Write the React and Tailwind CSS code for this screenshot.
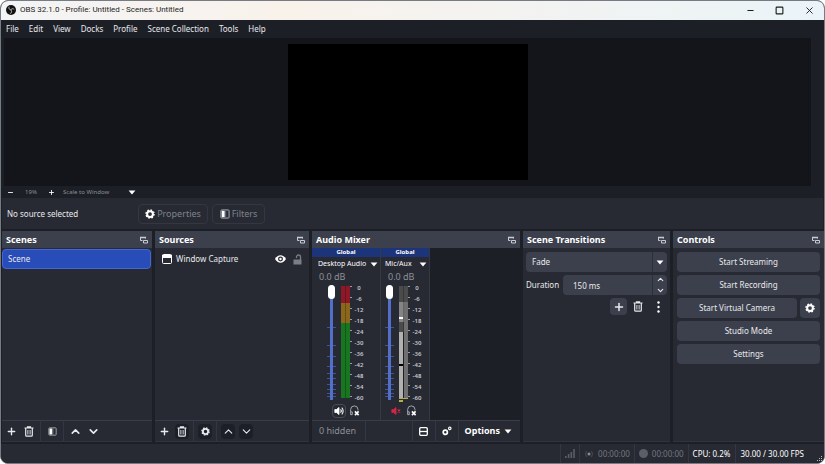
import React, { useState } from "react";
import { ChevronDown, ChevronUp, Minus, Plus, Square, X } from "lucide-react";

const MENUS = ["File", "Edit", "View", "Docks", "Profile", "Scene Collection", "Tools", "Help"];
const LEVELS = [0, -6, -12, -18, -24, -30, -36, -42, -48, -54, -60];
const FADER_TICKS = [42, 60, 71, 81, 88, 93, 99, 104, 108, 111];

const Gear = ({ className }) => (
  <svg viewBox="0 0 16 16" className={className} aria-hidden="true">
    <circle cx="8" cy="8" r="4.6" fill="none" stroke="currentColor" strokeWidth="3.2" />
    <circle cx="8" cy="8" r="6.4" fill="none" stroke="currentColor" strokeWidth="2.4" strokeDasharray="2.6 2.43" />
  </svg>
);

const FilterIcon = ({ className }) => (
  <svg viewBox="0 0 16 16" className={className} aria-hidden="true">
    <defs>
      <linearGradient id="fade">
        <stop offset="0" stopColor="#fff" />
        <stop offset="1" stopColor="#fff" stopOpacity="0" />
      </linearGradient>
    </defs>
    <rect x="1.5" y="1.5" width="13" height="13" rx="1" fill="none" stroke="#a9acb3" strokeWidth="1.6" />
    <rect x="3" y="3" width="8" height="10" fill="url(#fade)" />
    <rect x="3" y="3" width="4" height="10" fill="#fff" />
  </svg>
);

const Trash = () => (
  <svg viewBox="0 0 10 11" className="h-[11px] w-[10px]" fill="none" stroke="currentColor" aria-hidden="true">
    <path d="M.5 2h9M3.5 2V.8h3V2M1.7 2.5v6.8a.9.9 0 0 0 .9.9h4.8a.9.9 0 0 0 .9-.9V2.5" strokeWidth="1.2" />
    <path d="M3.6 4v4.5M5 4v4.5M6.4 4v4.5" strokeWidth=".8" opacity=".8" />
  </svg>
);

const PopOut = () => (
  <svg viewBox="0 0 8 8" className="h-2 w-2" fill="none" stroke="#c9cbd1" aria-hidden="true">
    <path d="M.5 4.5v-3h5v1" strokeWidth="1" />
    <path d="M0 1.5h6" strokeWidth="1.4" />
    <path d="M3.5 4.5h4v2.5h-4z" strokeWidth="1" />
    <path d="M.5 4.5h2" strokeWidth="1" />
  </svg>
);

const Caret = () => (
  <svg viewBox="0 0 8 5" className="h-[5px] w-2 shrink-0" aria-hidden="true">
    <path d="M.6.4h6.8L4 4.6z" fill="#fff" />
  </svg>
);

const Dock = ({ title, children, footer }) => (
  <section className="flex min-w-0 flex-col border-b border-[#31343e] bg-[#272a33]">
    <header className="flex h-[17px] shrink-0 items-center justify-between bg-[#3c404d] px-1">
      <h2 className="text-[9px] font-bold text-white">{title}</h2>
      <button aria-label={`Undock ${title}`}><PopOut /></button>
    </header>
    <div className="flex min-h-0 flex-1 flex-col">{children}</div>
    {footer && <footer className="flex h-[21px] shrink-0 items-center border-t border-[#3a3d48]">{footer}</footer>}
  </section>
);

const ToolButton = ({ label, dark, children }) => (
  <button aria-label={label} className="flex h-[15px] w-[18px] shrink-0 items-center justify-center">
    <span className={`flex h-[15px] w-[14px] items-center justify-center rounded-sm ${dark ? "bg-[#1d1f28]" : ""}`}>{children}</span>
  </button>
);

const Divider = () => <span className="mx-[2px] h-5 w-px shrink-0 bg-[#343741]" />;

const Meter = ({ muted }) => (
  <svg viewBox="0 0 26 118" className="h-[118px] w-[26px] shrink-0" aria-hidden="true">
    {muted ? (
      <>
        <path d="M0 1h9v16H0z" fill="#4b4b4b" />
        <path d="M0 17h9v20H0z" fill="#858585" />
        <path d="M0 37h9v10H0z" fill="#4b4b4b" />
        <path d="M5 17h4v96H5z" fill="#6f6f6f" />
        <path d="M0 47h4v66H0z" fill="#b0b0ae" />
        <path d="M0 32h4v2H0z" fill="#fff" />
        <path d="M0 79h4v2H0z" fill="#000" />
        <path d="M0 113h9v1H0zM0 115h4v2H0z" fill="#b5ad4c" />
      </>
    ) : (
      <>
        <path d="M0 1h9v17H0z" fill="#8f1828" />
        <path d="M0 18h9v20H0z" fill="#8b671b" />
        <path d="M0 38h9v75H0z" fill="#17761f" />
      </>
    )}
    <path d="M4 1h1v112H4z" fill="#000" opacity=".25" />
    {LEVELS.map((level, i) => (
      <g key={level}>
        <path d={`M9 ${1.5 + i * 11}h2`} stroke="#9a9ca4" />
        <text x="18" y={5 + i * 11} textAnchor="middle" fontSize="6" fontWeight="600" fill="#c4c6cc">{level}</text>
      </g>
    ))}
  </svg>
);

const Channel = ({ name, muted }) => {
  const [volume, setVolume] = useState(100);
  return (
    <div className={`flex shrink-0 flex-col border-r border-[#363944] ${muted ? "w-[49px]" : "w-[69px]"}`}>
      <div className="h-[9px] bg-[#1c3479] text-center text-[6px] leading-[9px] font-bold text-white">Global</div>
      <button className={`flex h-[14px] items-center justify-between pr-[2px] text-[7px] whitespace-nowrap text-white ${muted ? "pl-1" : "pl-[6px]"}`}>
        {name} <Caret />
      </button>
      <div className="h-[14px] px-[7px] text-[9px] leading-3 text-[#8d9099]">0.0 dB</div>
      <div className={`flex h-[116px] ${muted ? "pl-[4px]" : "pl-[15px]"}`}>
        <div className="relative w-[14px] shrink-0">
          <svg viewBox="0 0 9 114" className="absolute top-0 left-0 h-[114px] w-[9px]" stroke="#3e559b" aria-hidden="true">
            {FADER_TICKS.map((y) => <path key={y} d={`M0 ${y + 0.5}h9`} />)}
          </svg>
          <input
            type="range"
            aria-label={`${name} volume`}
            value={volume}
            onChange={(e) => setVolume(e.target.value)}
            className="relative ml-px block h-[115px] w-[7px] appearance-none bg-[linear-gradient(to_right,transparent_2px,#5270ca_2px,#5270ca_5px,transparent_5px)] [direction:rtl] [writing-mode:vertical-lr] [&::-webkit-slider-thumb]:h-[14px] [&::-webkit-slider-thumb]:w-[7px] [&::-webkit-slider-thumb]:appearance-none [&::-webkit-slider-thumb]:rounded-full [&::-webkit-slider-thumb]:bg-white"
          />
        </div>
        <Meter muted={muted} />
      </div>
      <div className={`flex flex-1 items-center gap-[3px] ${muted ? "pl-2" : "pl-5"}`}>
        <button aria-label={`Mute ${name}`} className={`flex h-[14px] w-[14px] items-center justify-center rounded-sm border ${muted ? "border-transparent text-[#cf2745]" : "border-[#484c58] text-white"}`}>
          <svg viewBox="0 0 12 12" className="h-[10px] w-[10px]" fill="none" stroke="currentColor" aria-hidden="true">
            <path d="M1 4.2h2L6 1.8v8.4L3 7.8H1z" fill="currentColor" />
            {muted ? <path d="M8 4l3 4M11 4L8 8" strokeWidth="1.3" /> : <path d="M7.8 4c1 1 1 3 0 4M9.3 2c2.2 2 2.2 6 0 8" strokeWidth="1.3" />}
          </svg>
        </button>
        <button aria-label={`Monitor ${name}`} className="text-white">
          <svg viewBox="0 0 12 12" className="h-[11px] w-[11px]" fill="none" stroke="currentColor" aria-hidden="true">
            <path d="M2.5 10.5H1.8V5a4 4 0 0 1 8 0v1" stroke="#aeb0b7" />
            <path d="M2 7.5h1.6v3H2" stroke="#aeb0b7" />
            <path d="M6.5 7l4 4M10.5 7l-4 4" strokeWidth="1.8" />
          </svg>
        </button>
      </div>
    </div>
  );
};

const ControlButton = ({ children }) => (
  <button className="h-5 flex-1 rounded-sm bg-[#3c404d] text-center">{children}</button>
);

const App = () => {
  const [scale, setScale] = useState("Scale to Window");
  const [transition, setTransition] = useState("Fade");
  const [duration, setDuration] = useState("150 ms");

  return (
    <div className="flex h-screen flex-col overflow-hidden rounded-lg border border-[#777b84] bg-[#1d1f27] font-['Noto_Sans',sans-serif] text-[8px] leading-3 text-[#e8e9ec]">
      {/* Title bar */}
      <div className="flex h-[19px] shrink-0 items-center bg-linear-to-r from-[#f3f4f5] via-[#f9f2eb] via-35% to-[#eaf4f8] pb-px pl-[5px] font-[Roboto,sans-serif] text-[#1c1c1c]">
        <svg viewBox="0 0 20 20" className="mr-1 h-[10px] w-[10px]" aria-hidden="true">
          <circle cx="10" cy="10" r="10" fill="#111" />
          <g fill="none" stroke="#d5d5d5" strokeWidth="1.5">
            <path d="M6 3.5c-1 4 1 6 4 6.5M16.5 9c-3-3-6-2-6.5 1M8 17c4-1 4-4 2-7" />
          </g>
        </svg>
        <h1 className="flex-1">OBS 32.1.0 - Profile: Untitled - Scenes: Untitled</h1>
        <div className="flex items-center gap-5 pr-[9px]">
          <button aria-label="Minimize"><Minus className="h-[9px] w-[9px]" strokeWidth={3} /></button>
          <button aria-label="Maximize"><Square className="h-[9px] w-[9px]" strokeWidth={3} /></button>
          <button aria-label="Close"><X className="h-[11px] w-[11px]" /></button>
        </div>
      </div>

      {/* Menu bar */}
      <nav className="flex h-[18px] shrink-0 items-center gap-[10px] px-[5px]">
        {MENUS.map((menu) => <button key={menu}>{menu}</button>)}
      </nav>

      {/* Preview */}
      <main className="mr-[13px] ml-[3px] flex h-[148px] shrink-0 justify-center bg-[#14151b] py-[6px]">
        <div className="aspect-[30/17] h-full bg-black" />
      </main>
      <div className="flex h-3 shrink-0 items-center pl-[6px] text-[6px] text-[#8c8e96]">
        <button aria-label="Zoom out" className="text-white"><Minus className="h-[7px] w-[7px]" strokeWidth={3} /></button>
        <span className="w-[34px] text-center">19%</span>
        <button aria-label="Zoom in" className="text-white"><Plus className="h-[7px] w-[7px]" strokeWidth={3} /></button>
        <select aria-label="Preview scale" value={scale} onChange={(e) => setScale(e.target.value)} className="ml-2 w-[65px] appearance-none">
          <option>Scale to Window</option>
          <option>Canvas</option>
        </select>
        <Caret />
      </div>

      {/* Source toolbar */}
      <div className="mx-px flex h-[31px] shrink-0 items-center bg-[#272a33] pl-[5px]">
        <span className="w-[131px]">No source selected</span>
        <button className="flex h-5 w-[70px] items-center justify-center gap-[2px] rounded-sm border border-[#343741] text-[9px] text-[#7f828b]">
          <Gear className="h-[10px] w-[10px] text-white" />Properties
        </button>
        <button className="ml-1 flex h-5 w-[53px] items-center justify-center gap-[2px] rounded-sm border border-[#343741] text-[9px] text-[#7f828b]">
          <FilterIcon className="h-[10px] w-[10px]" />Filters
        </button>
      </div>

      {/* Docks */}
      <div className="mt-[2px] ml-px grid min-h-0 flex-1 grid-cols-[150fr_154fr_208fr_147fr_151fr] gap-[3px]">
        <Dock
          title="Scenes"
          footer={
            <>
              <ToolButton label="Add scene"><Plus className="h-[11px] w-[11px]" strokeWidth={3} /></ToolButton>
              <ToolButton label="Remove scene"><Trash /></ToolButton>
              <Divider />
              <ToolButton label="Scene filters"><FilterIcon className="h-[9px] w-[9px]" /></ToolButton>
              <Divider />
              <ToolButton label="Move scene up"><ChevronUp className="h-[13px] w-[13px]" strokeWidth={3} /></ToolButton>
              <ToolButton label="Move scene down"><ChevronDown className="h-[13px] w-[13px]" strokeWidth={3} /></ToolButton>
            </>
          }
        >
          <button className="mt-px mr-px h-5 rounded-sm border border-[#4567d5] bg-[#284cb8] px-[5px] text-left">Scene</button>
        </Dock>

        <Dock
          title="Sources"
          footer={
            <>
              <ToolButton label="Add source"><Plus className="h-[11px] w-[11px]" strokeWidth={3} /></ToolButton>
              <ToolButton label="Remove source" dark><Trash /></ToolButton>
              <Divider />
              <ToolButton label="Source properties" dark><Gear className="h-[9px] w-[9px]" /></ToolButton>
              <Divider />
              <ToolButton label="Move source up" dark><ChevronUp className="h-[13px] w-[13px]" /></ToolButton>
              <ToolButton label="Move source down" dark><ChevronDown className="h-[13px] w-[13px]" /></ToolButton>
            </>
          }
        >
          <div className="flex h-[22px] items-center px-[7px]">
            <svg viewBox="0 0 10 10" className="mr-1 h-[10px] w-[10px]" aria-hidden="true">
              <rect x=".5" y=".5" width="9" height="9" rx="1" fill="none" stroke="#fff" />
              <path d="M0 4V1h10v3z" fill="#fff" />
            </svg>
            <span className="flex-1">Window Capture</span>
            <button aria-label="Hide source" className="mr-[7px]">
              <svg viewBox="0 0 20 14" className="h-2 w-[11px]" aria-hidden="true">
                <path d="M0 7C5-2 15-2 20 7 15 16 5 16 0 7z" fill="#fff" />
                <circle cx="10" cy="7" r="4.5" fill="#272a33" />
                <circle cx="10" cy="7" r="2.2" fill="#fff" />
              </svg>
            </button>
            <button aria-label="Lock source">
              <svg viewBox="0 0 9 11" className="h-[11px] w-[9px]" aria-hidden="true">
                <path d="M3.5 4V3a2 2 0 0 1 4 0v3" fill="none" stroke="#7c7e85" strokeWidth="1.3" />
                <path d="M.5 5.5h8V10.5h-8z" fill="#7c7e85" />
              </svg>
            </button>
          </div>
        </Dock>

        <Dock
          title="Audio Mixer"
          footer={
            <>
              <button className="w-[51px] text-center text-[9px] text-[#8d9099]">0 hidden</button>
              <Divider />
              <span className="flex-1" />
              <Divider />
              <ToolButton label="Mixer layout">
                <svg viewBox="0 0 9 9" className="h-[9px] w-[9px]" fill="none" stroke="#fff" strokeWidth="1.3" aria-hidden="true">
                  <rect x=".7" y=".7" width="7.6" height="7.6" rx="1" /><path d="M1 4.5h7" />
                </svg>
              </ToolButton>
              <Divider />
              <ToolButton label="Advanced audio properties">
                <svg viewBox="0 0 10 10" className="h-[10px] w-[10px]" fill="none" stroke="#fff" aria-hidden="true">
                  <circle cx="3.3" cy="6.3" r="2.1" strokeWidth="1.7" /><circle cx="7.8" cy="2.4" r="1.2" strokeWidth="1.2" />
                </svg>
              </ToolButton>
              <Divider />
              <button className="mr-2 ml-1 flex items-center gap-1 text-[9px] font-bold text-white">Options <Caret /></button>
            </>
          }
        >
          <div className="flex flex-1 bg-[#1d1f27]">
            <div className="flex bg-[#272a33]">
              <Channel name="Desktop Audio" />
              <Channel name="Mic/Aux" muted />
            </div>
          </div>
        </Dock>

        <Dock title="Scene Transitions">
          <div className="flex flex-col gap-[3px] px-[3px] pt-1">
            <div className="flex h-5 items-center rounded-sm bg-[#3c404d] pr-[3px]">
              <select aria-label="Transition" value={transition} onChange={(e) => setTransition(e.target.value)} className="h-full flex-1 appearance-none pl-[6px]">
                <option>Fade</option>
                <option>Cut</option>
              </select>
              <span className="mr-[3px] h-full w-px bg-[#2c2f39]" />
              <Caret />
            </div>
            <div className="flex h-5 items-center">
              <label htmlFor="duration" className="w-[37px]">Duration</label>
              <div className="flex h-full min-w-0 flex-1 items-center rounded-sm bg-[#3c404d]">
                <input id="duration" value={duration} onChange={(e) => setDuration(e.target.value)} className="h-full min-w-0 flex-1 pl-[10px] outline-none" />
                <div className="flex h-full w-[15px] flex-col items-center justify-between border-l border-[#2c2f39]">
                  <button aria-label="Increase duration"><ChevronUp className="h-[9px] w-[9px]" strokeWidth={3} /></button>
                  <button aria-label="Decrease duration"><ChevronDown className="h-[9px] w-[9px]" strokeWidth={3} /></button>
                </div>
              </div>
            </div>
            <div className="flex items-center justify-end gap-[2px]">
              <button aria-label="Add transition" className="flex h-[17px] w-[17px] items-center justify-center rounded-sm bg-[#3c404d]"><Plus className="h-3 w-3" strokeWidth={3} /></button>
              <ToolButton label="Remove transition"><Trash /></ToolButton>
              <ToolButton label="Transition options">
                <svg viewBox="0 0 3 12" className="h-3 w-[3px]" fill="#fff" aria-hidden="true">
                  <circle cx="1.5" cy="1.5" r="1.2" /><circle cx="1.5" cy="6" r="1.2" /><circle cx="1.5" cy="10.5" r="1.2" />
                </svg>
              </ToolButton>
            </div>
          </div>
        </Dock>

        <Dock title="Controls">
          <div className="flex flex-col gap-[3px] px-1 pt-1">
            <div className="flex"><ControlButton>Start Streaming</ControlButton></div>
            <div className="flex"><ControlButton>Start Recording</ControlButton></div>
            <div className="flex gap-[3px]">
              <ControlButton>Start Virtual Camera</ControlButton>
              <button aria-label="Configure virtual camera" className="flex h-5 w-5 items-center justify-center rounded-sm bg-[#3c404d] text-white"><Gear className="h-[10px] w-[10px]" /></button>
            </div>
            <div className="flex"><ControlButton>Studio Mode</ControlButton></div>
            <div className="flex"><ControlButton>Settings</ControlButton></div>
          </div>
        </Dock>
      </div>

      {/* Status bar */}
      <div className="mt-[2px] flex h-[19px] shrink-0 items-center justify-end bg-[#272a33] text-[#73767f]">
        <div className="flex h-full items-center border-l border-[#343741] px-1">
          <svg viewBox="0 0 10 9" className="h-[9px] w-[10px]" fill="#5b5e67" aria-hidden="true"><path d="M0 7h1.6v2H0zM2.8 5h1.6v4H2.8zM5.5 3h1.6v6H5.5zM8.2 0h1.6v9H8.2z" /></svg>
        </div>
        <div className="flex h-full items-center gap-1 border-l border-[#343741] px-1">
          <svg viewBox="0 0 10 8" className="h-2 w-[10px]" fill="none" stroke="#484b55" aria-hidden="true"><circle cx="5" cy="4" r="1.5" fill="#a4a6ad" /><path d="M2.5 1q-2 3 0 6M7.5 1q2 3 0 6" /></svg>
          00:00:00
        </div>
        <div className="flex h-full items-center gap-1 border-l border-[#343741] px-1">
          <span className="h-[9px] w-[9px] rounded-full bg-[#5b5e67]" />00:00:00
        </div>
        <div className="flex h-full items-center border-l border-[#343741] px-1 text-white">CPU: 0.2%</div>
        <div className="flex h-full items-center border-l border-[#343741] pr-3 pl-[5px] text-white">30.00 / 30.00 FPS</div>
        <svg viewBox="0 0 7 7" className="mr-px h-[7px] w-[7px] self-end" fill="#b9bbc1" aria-hidden="true">
          <path d="M5 0h1v1H5zM3 2h1v1H3zM5 2h1v1H5zM1 4h1v1H1zM3 4h1v1H3zM5 4h1v1H5z" />
        </svg>
      </div>
    </div>
  );
};

export default App;
